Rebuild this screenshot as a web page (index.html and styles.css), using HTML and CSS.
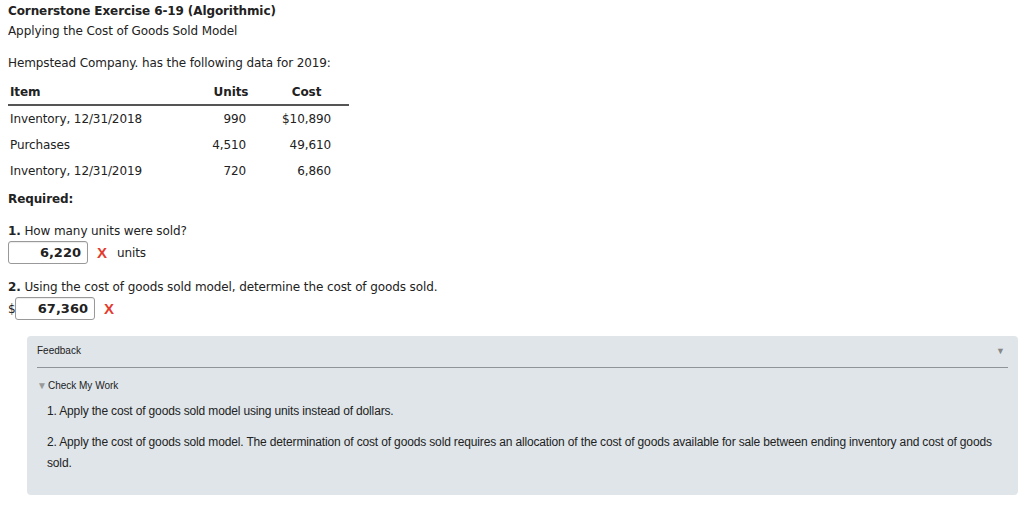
FILE: index.html
```html
<!DOCTYPE html>
<html lang="en">
<head>
    <meta charset="UTF-8">
    <title>Cornerstone Exercise 6-19</title>
    <link rel="stylesheet" href="styles.css">
</head>
<body>
    <div class="problem">
        <h1 class="title">Cornerstone Exercise 6-19 (Algorithmic)</h1>
        <p class="subtitle">Applying the Cost of Goods Sold Model</p>
        <p class="intro">Hempstead Company. has the following data for 2019:</p>

        <table class="data-table">
            <thead>
                <tr>
                    <th class="col-item">Item</th>
                    <th class="col-units">Units</th>
                    <th class="col-cost">Cost</th>
                </tr>
            </thead>
            <tbody>
                <tr>
                    <td class="col-item">Inventory, 12/31/2018</td>
                    <td class="num">990</td>
                    <td class="num">$10,890</td>
                </tr>
                <tr>
                    <td class="col-item">Purchases</td>
                    <td class="num">4,510</td>
                    <td class="num">49,610</td>
                </tr>
                <tr>
                    <td class="col-item">Inventory, 12/31/2019</td>
                    <td class="num">720</td>
                    <td class="num">6,860</td>
                </tr>
            </tbody>
        </table>

        <h2 class="required">Required:</h2>

        <div class="question">
            <p class="q-text"><b>1.</b> How many units were sold?</p>
            <div class="answer-row">
                <span class="answer-box">6,220</span>
                <span class="wrong">X</span>
                <span class="unit">units</span>
            </div>
        </div>

        <div class="question q-two">
            <p class="q-text"><b>2.</b> Using the cost of goods sold model, determine the cost of goods sold.</p>
            <div class="answer-row">
                <span class="dollar">$</span>
                <span class="answer-box">67,360</span>
                <span class="wrong">X</span>
            </div>
        </div>
    </div>

    <div class="feedback">
        <div class="feedback-header">
            <span>Feedback</span>
            <span class="toggle">&#9660;</span>
        </div>
        <div class="check-work">
            <span class="tri">&#9660;</span>Check My Work
        </div>
        <p class="hint">1. Apply the cost of goods sold model using units instead of dollars.</p>
        <p class="hint">2. Apply the cost of goods sold model. The determination of cost of goods sold requires an allocation of the cost of goods available for sale between ending inventory and cost of goods sold.</p>
    </div>
</body>
</html>
```

FILE: styles.css
```css
body {
    margin: 0;
    padding: 0;
    background: #fff;
    color: #222;
    font-family: "DejaVu Sans", Verdana, sans-serif;
    font-size: 12px;
}

.problem {
    padding: 4px 8px 0 8px;
    letter-spacing: -0.1px;
}

.title {
    margin: 0;
    font-size: 12px;
    font-weight: bold;
    line-height: 15px;
}

.subtitle {
    margin: 5px 0 0 0;
    line-height: 15px;
}

.intro {
    margin: 17px 0 0 0;
    line-height: 15px;
}

.data-table {
    margin-top: 9px;
    border-collapse: collapse;
    width: 341px;
}

.data-table th {
    font-weight: bold;
    height: 24px;
    padding: 0;
    border-bottom: 2px solid #555;
    vertical-align: middle;
}

.data-table td {
    height: 26px;
    padding: 0;
}

.col-item {
    width: 188px;
    text-align: left;
    padding-left: 2px !important;
}

.col-units {
    width: 66px;
    text-align: center;
}

.col-cost {
    text-align: center;
}

.num {
    text-align: right;
    padding-right: 18px !important;
}

.required {
    margin: 8px 0 0 0;
    font-size: 12px;
    font-weight: bold;
    line-height: 15px;
}

.question {
    margin-top: 17px;
}

.q-text {
    margin: 0;
    line-height: 15px;
}

.answer-row {
    display: flex;
    align-items: center;
    gap: 9px;
    margin-top: 2px;
}

.answer-box {
    box-sizing: border-box;
    width: 80px;
    height: 23px;
    border: 1px solid #999;
    border-radius: 3px;
    box-shadow: inset 0 1px 1px rgba(0, 0, 0, 0.08);
    text-align: right;
    padding-right: 6px;
    font-weight: bold;
    font-size: 13px;
    line-height: 21px;
    letter-spacing: 0;
}

.wrong {
    color: #e33b2e;
    font-family: "Liberation Sans", Arial, sans-serif;
    font-weight: bold;
    font-size: 15px;
}

.unit {
    margin-left: 1px;
}

.q-two {
    margin-top: 16px;
}

.q-two .answer-row {
    gap: 0;
}

.q-two .wrong {
    margin-left: 9px;
}

.dollar {
    width: 7px;
}

.feedback {
    margin: 16px 6px 0 27px;
    padding: 8px 10px 21px 10px;
    background: #dfe5e9;
    border-radius: 4px;
    font-family: "Liberation Sans", Arial, sans-serif;
    color: #222;
}

.feedback-header {
    display: flex;
    justify-content: space-between;
    font-size: 10px;
    line-height: 14px;
    padding-bottom: 9px;
    border-bottom: 1px solid #8e9499;
}

.toggle {
    color: #888;
    font-size: 9px;
    margin-right: 3px;
}

.check-work {
    margin-top: 12px;
    font-size: 10px;
    line-height: 12px;
}

.tri {
    color: #999;
    font-size: 10px;
    margin-right: 1px;
}

.hint {
    margin: 9px 0 0 0;
    padding-left: 10px;
    font-size: 12px;
    letter-spacing: -0.15px;
    line-height: 21px;
}

.hint + .hint {
    margin-top: 10px;
}
```
